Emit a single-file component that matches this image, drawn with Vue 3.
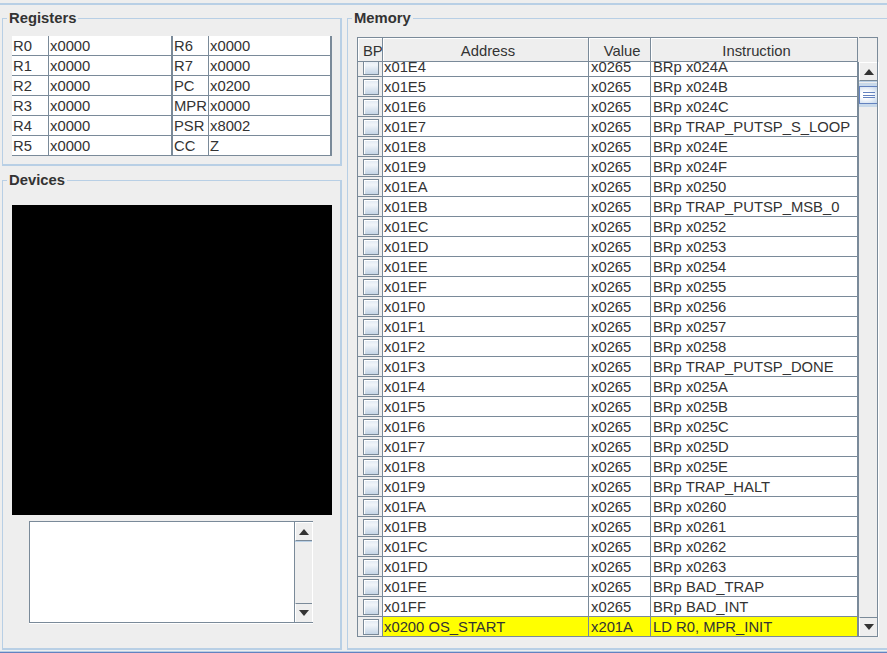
<script setup>
const regRows = [
  ['R0', 'x0000', 'R6', 'x0000'],
  ['R1', 'x0000', 'R7', 'x0000'],
  ['R2', 'x0000', 'PC', 'x0200'],
  ['R3', 'x0000', 'MPR', 'x0000'],
  ['R4', 'x0000', 'PSR', 'x8002'],
  ['R5', 'x0000', 'CC', 'Z'],
]

const instr = [
  'BRp x024A', 'BRp x024B', 'BRp x024C', 'BRp TRAP_PUTSP_S_LOOP', 'BRp x024E', 'BRp x024F',
  'BRp x0250', 'BRp TRAP_PUTSP_MSB_0', 'BRp x0252', 'BRp x0253', 'BRp x0254', 'BRp x0255',
  'BRp x0256', 'BRp x0257', 'BRp x0258', 'BRp TRAP_PUTSP_DONE', 'BRp x025A', 'BRp x025B',
  'BRp x025C', 'BRp x025D', 'BRp x025E', 'BRp TRAP_HALT', 'BRp x0260', 'BRp x0261',
  'BRp x0262', 'BRp x0263', 'BRp BAD_TRAP', 'BRp BAD_INT',
]

// addresses run x01E4..x01FF, then the PC row
const memRows = instr.map((text, i) => ({
  addr: 'x' + (0x1e4 + i).toString(16).toUpperCase().padStart(4, '0'),
  value: 'x0265',
  text,
}))
memRows.push({ addr: 'x0200 OS_START', value: 'x201A', text: 'LD R0, MPR_INIT', current: true })
</script>

<template>
  <div class="window">
    <div class="top-rule"></div>
    <div class="panels">
      <div class="left">
        <fieldset class="group regs">
          <legend>Registers</legend>
          <div class="reg-table">
            <div v-for="row in regRows" :key="row[0]" class="reg-row">
              <span class="cell">{{ row[0] }}</span>
              <span class="cell split">{{ row[1] }}</span>
              <span class="cell">{{ row[2] }}</span>
              <span class="cell">{{ row[3] }}</span>
            </div>
          </div>
        </fieldset>
        <fieldset class="group devices">
          <legend>Devices</legend>
          <div class="screen"></div>
          <div class="console">
            <div class="console-text"></div>
            <div class="scrollbar">
              <div class="arrow-btn up"><span class="tri-up"></span></div>
              <div class="track"></div>
              <div class="arrow-btn down"><span class="tri-down"></span></div>
            </div>
          </div>
        </fieldset>
      </div>

      <fieldset class="group memory">
        <legend>Memory</legend>
        <div class="mem-table">
          <div class="mem-main">
            <div class="mem-head">
              <span class="head-cell">BP</span>
              <span class="head-cell">Address</span>
              <span class="head-cell">Value</span>
              <span class="head-cell">Instruction</span>
            </div>
            <div class="mem-view">
              <div class="mem-scroll">
                <div v-for="row in memRows" :key="row.addr" class="mem-row" :class="{ current: row.current }">
                  <span class="bp"><span class="check"></span></span>
                  <span class="cell">{{ row.addr }}</span>
                  <span class="cell">{{ row.value }}</span>
                  <span class="cell">{{ row.text }}</span>
                </div>
              </div>
            </div>
          </div>
          <div class="mem-side">
            <div class="corner"></div>
            <div class="scrollbar">
              <div class="arrow-btn up"><span class="tri-up"></span></div>
              <div class="track">
                <div class="thumb-halo">
                  <div class="thumb"><i></i><i></i><i></i></div>
                </div>
              </div>
              <div class="arrow-btn down"><span class="tri-down"></span></div>
            </div>
          </div>
        </div>
      </fieldset>
    </div>
    <div class="bottom-rule"></div>
  </div>
</template>

<style>
html, body {
  margin: 0;
  background: #eeeeee;
}
</style>

<style scoped>
.window {
  width: 887px;
  height: 653px;
  overflow: hidden;
  background: #eeeeee;
  color: #333333;
  font-family: "Liberation Sans", Arial, sans-serif;
  font-size: 14.8px;
  display: flex;
  flex-direction: column;
}

.top-rule {
  height: 2px;
  margin-top: 3px;
  background: #b8cfe5;
  flex: none;
}

.bottom-rule {
  height: 2px;
  flex: none;
  background: #b8cfe5;
  border-bottom: 1px solid #6382bf;
  box-sizing: border-box;
}

.panels {
  flex: 1;
  display: flex;
  gap: 5px;
  padding: 5px 0 1px 2px;
  min-height: 0;
}

.left {
  width: 340px;
  display: flex;
  flex-direction: column;
  gap: 6px;
}

.group {
  margin: 0;
  border: 2px solid #b8cfe5;
  border-width: 1px 2px 2px 1px;
  padding: 0;
  min-width: 0;
  box-sizing: border-box;
}

legend {
  margin-left: -5px;
  padding: 0 2px;
  font-weight: bold;
  font-size: 14.8px;
  line-height: 16px;
}

.regs {
  height: 156px;
  padding: 10px 9px 0 9px;
}

.reg-table {
  width: 320px;
  border-right: 2px solid #7a8a99;
  box-sizing: border-box;
  background: #fff;
}

.reg-row {
  display: grid;
  grid-template-columns: 37px 124px 36px 1fr;
  height: 20px;
  box-sizing: border-box;
  border-bottom: 1px solid #7a8a99;
}

.cell {
  padding-left: 1px;
  line-height: 21px;
  border-right: 1px solid #7a8a99;
  white-space: nowrap;
  overflow: hidden;
}

.cell:last-child {
  border-right: none;
}

.split {
  border-right-width: 2px;
}

.devices {
  flex: 1;
  padding: 17px 9px 0 9px;
}

.screen {
  width: 320px;
  height: 310px;
  background: #000;
}

.console {
  width: 284px;
  height: 102px;
  margin: 6px 0 0 17px;
  display: flex;
  border: 1px solid #7a8a99;
  border-width: 1px 0 1px 1px;
  box-sizing: border-box;
  background: #fff;
  box-shadow: 0 1px 0 #fff;
}

.console-text {
  flex: 1;
}

.scrollbar {
  width: 19px;
  flex: none;
  display: flex;
  flex-direction: column;
  background: #eeeeee;
  border-left: 1px solid #7a8a99;
  border-right: 1px solid #fff;
  box-sizing: border-box;
}

.arrow-btn {
  height: 19px;
  flex: none;
  display: flex;
  align-items: center;
  justify-content: center;
  background: #eeeeee;
  border-top: 1px solid #fff;
  border-left: 1px solid #fff;
  box-sizing: border-box;
}

.up {
  border-bottom: 1px solid #7a8a99;
}

.down {
  border-top: 1px solid #7a8a99;
}

.tri-up {
  border: 5px solid transparent;
  border-top: 0;
  border-bottom: 6px solid #333333;
}

.tri-down {
  border: 5px solid transparent;
  border-bottom: 0;
  border-top: 6px solid #333333;
}

.track {
  flex: 1;
  border-top: 1px solid #b8cfe5;
}

.memory {
  width: 540px;
  padding: 11px 0 0 9px;
  border-right: none;
}

.mem-table {
  width: 521px;
  display: flex;
}

.mem-main {
  width: 502px;
  flex: none;
}

.mem-head,
.mem-row {
  display: grid;
  grid-template-columns: 25px 206px 62px 1fr;
}

.mem-head {
  height: 25px;
  box-sizing: border-box;
  border: 1px solid #7a8a99;
  border-right: none;
  background: #eeeeee;
  margin-right: 1px;
}

.head-cell {
  padding-left: 4px;
  text-align: center;
  line-height: 26px;
  border-left: 1px solid #fff;
  border-right: 1px solid #7a8a99;
  box-shadow: inset 0 1px 0 #fff;
  white-space: nowrap;
  overflow: hidden;
}

.mem-view {
  height: 575px;
  overflow: hidden;
  border-left: 1px solid #7a8a99;
  border-right: 2px solid #7a8a99;
  box-sizing: border-box;
  background: #fff;
}

.mem-scroll {
  margin-top: -5px;
}

.mem-row {
  height: 20px;
  box-sizing: border-box;
  border-bottom: 1px solid #7a8a99;
}

.mem-row .cell:nth-child(n + 3) {
  padding-left: 2px;
}

.mem-row.current {
  background: #ffff00;
}

.bp {
  display: flex;
  align-items: center;
  justify-content: center;
  padding-left: 1px;
  background: #eeeeee;
  border-right: 1px solid #7a8a99;
}

.check {
  width: 16px;
  height: 16px;
  box-sizing: border-box;
  border: 1px solid #7a8a99;
  box-shadow: inset 1px 1px 0 #fff;
  background: linear-gradient(#dfe8f2, #f1f5f9 35%, #c6d6e7);
}

.mem-side {
  width: 19px;
  display: flex;
  flex-direction: column;
}

.corner {
  height: 25px;
  box-sizing: border-box;
  border-top: 1px solid #7a8a99;
  border-right: 1px solid #7a8a99;
  flex: none;
}

.mem-side .scrollbar {
  width: 19px;
  height: 575px;
  border-left: none;
  border-right: 1px solid #7a8a99;
  border-bottom: 1px solid #7a8a99;
  box-shadow: 1px 0 0 #fff;
}

.thumb-halo {
  margin-top: 1px;
  padding: 3px 0;
  background: #c8d9ea;
}

.thumb {
  height: 18px;
  box-sizing: border-box;
  border: 1px solid #6382bf;
  border-right: none;
  background: radial-gradient(ellipse at 35% 50%, #fff 30%, #c4d6ea 100%);
  display: flex;
  flex-direction: column;
  align-items: center;
  justify-content: center;
  gap: 1.5px;
}

.thumb i {
  display: block;
  width: 12px;
  height: 1px;
  background: #6382bf;
}
</style>
